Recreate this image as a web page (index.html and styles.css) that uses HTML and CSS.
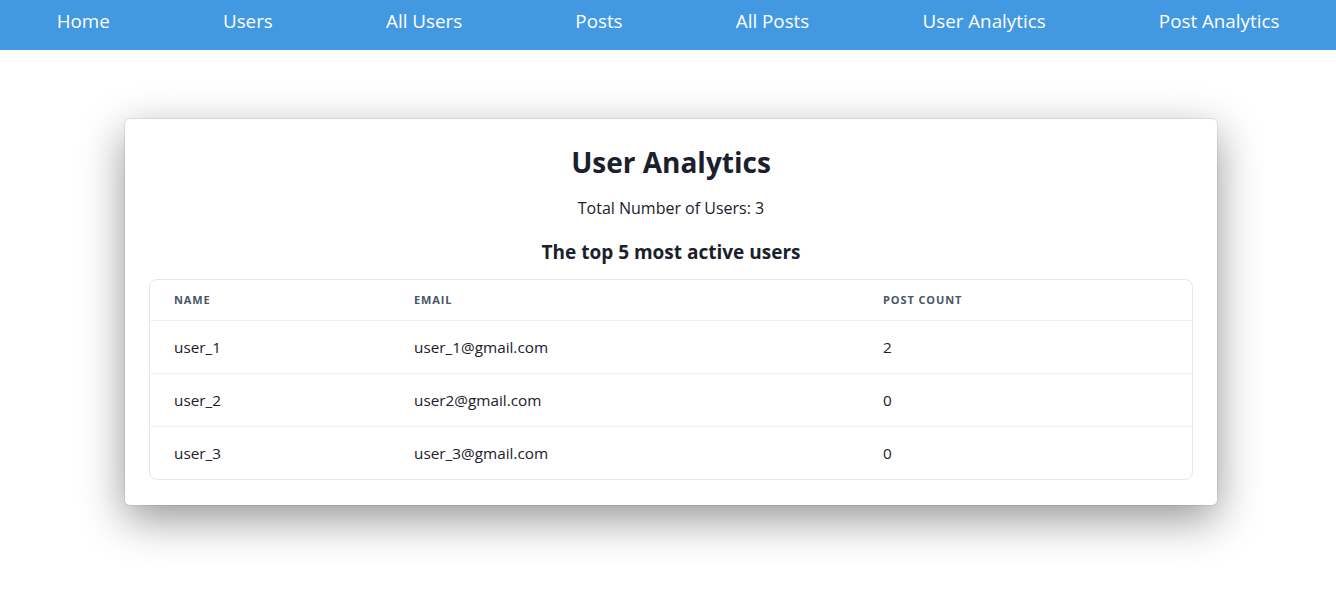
FILE: index.html
```html
<!DOCTYPE html>
<html>
<head>
<meta charset="utf-8">
<link rel="stylesheet" href="styles.css">
</head>
<body>
<nav class="nav">
  <a class="nav-link">Home</a>
  <a class="nav-link">Users</a>
  <a class="nav-link">All Users</a>
  <a class="nav-link">Posts</a>
  <a class="nav-link">All Posts</a>
  <a class="nav-link">User Analytics</a>
  <a class="nav-link">Post Analytics</a>
</nav>
<main class="main">
  <section class="card">
    <h1 class="title">User Analytics</h1>
    <p class="total">Total Number of Users: 3</p>
    <h2 class="subtitle">The top 5 most active users</h2>
    <div class="table-wrap">
      <table class="table">
        <thead>
          <tr><th class="c-name">Name</th><th class="c-email">Email</th><th class="c-count">Post Count</th></tr>
        </thead>
        <tbody>
          <tr><td>user_1</td><td>user_1@gmail.com</td><td>2</td></tr>
          <tr><td>user_2</td><td>user2@gmail.com</td><td>0</td></tr>
          <tr><td>user_3</td><td>user_3@gmail.com</td><td>0</td></tr>
        </tbody>
      </table>
    </div>
  </section>
</main>
</body>
</html>
```
FILE: styles.css
```css
* { box-sizing: border-box; }
html, body { margin: 0; padding: 0; background: #fff; }
body { font-family: "Open Sans", "Noto Sans", sans-serif; color: #1a202c; min-height: 100vh; }
.nav {
  height: 50px;
  background: #4299e1;
  display: flex;
  justify-content: space-around;
  align-items: center;
}
.nav-link {
  color: #fff;
  font-size: 18.8px;
  line-height: 28px;
  padding-bottom: 8px;
}
.main {
  padding: 69px 0 100px 6px;
  display: flex;
  justify-content: center;
}
.card {
  width: 1092px;
  background: #fff;
  border-radius: 5px;
  padding: 25px 24px 25px;
  box-shadow: 0 14px 44px rgba(0,0,0,0.42), 0 0 0 1px rgba(0,0,0,0.07);
}
.title {
  margin: 0;
  text-align: center;
  font-size: 28px;
  line-height: 36px;
  font-weight: 700;
}
.total {
  margin: 18px 0 0;
  text-align: center;
  font-size: 16px;
  line-height: 20px;
  color: #1a202c;
}
.subtitle {
  margin: 20px 0 0;
  text-align: center;
  font-size: 19px;
  line-height: 28px;
  font-weight: 700;
}
.table-wrap {
  margin-top: 13px;
  border: 1px solid #e2e8f0;
  border-radius: 8px;
  overflow: hidden;
}
.table { width: 100%; border-collapse: collapse; }
.table th {
  text-align: left;
  font-size: 11px;
  font-weight: 700;
  text-transform: uppercase;
  letter-spacing: 0.9px;
  color: #4a5568;
  height: 40px;
  padding: 0 24px;
  border-bottom: 1px solid #edf2f7;
}
.c-name { width: 240px; }
.c-email { width: 469px; }
.table td {
  font-size: 15.3px;
  color: #1a202c;
  height: 53px;
  padding: 0 24px;
  border-bottom: 1px solid #edf2f7;
}
.table tbody tr:last-child td { border-bottom: none; height: 53px; }
```
